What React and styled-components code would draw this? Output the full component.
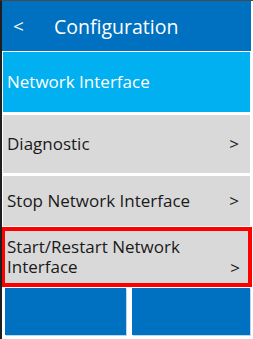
import React from 'react'
import styled, { createGlobalStyle } from 'styled-components'

const Global = createGlobalStyle`
  html, body { margin: 0; padding: 0; background: #ffffff; }
  * { box-sizing: border-box; }
`

const Screen = styled.div`
  width: 253px;
  height: 339px;
  background: #ffffff;
  border-left: 2px solid #1e1e1e;
  border-top: 1px solid #4a4a4a;
  display: flex;
  flex-direction: column;
  font-family: "Open Sans", "Noto Sans", sans-serif;
  overflow: hidden;
`

const Header = styled.div`
  height: 50px;
  margin-right: 2px;
  background: #0070c0;
  color: #ffffff;
  display: flex;
  align-items: center;
  padding-left: 11px;
`

const Back = styled.span`
  font-size: 19px;
  width: 41px;
`

const Title = styled.span`
  font-size: 19.5px;
`

const List = styled.div`
  display: flex;
  flex-direction: column;
  padding: 1px 0 0 1px;
  gap: 3px;
`

const Row = styled.div`
  height: ${p => p.$h}px;
  margin-right: ${p => p.$boxed ? 0 : 3}px;
  background: ${p => p.$active ? '#00b0f0' : '#d9d9d9'};
  color: ${p => p.$active ? '#ffffff' : '#1a1a1a'};
  display: flex;
  align-items: center;
  justify-content: space-between;
  padding: 0 ${p => p.$boxed ? 8 : 11}px 0 ${p => p.$boxed ? 2 : 4}px;
  font-size: 17px;
  line-height: 20px;
`

const Boxed = styled.div`
  margin-top: 1px;
  border: 4px solid #ff0000;
  margin-left: -1px;
  margin-right: 1px;
`

const Label = styled.span`
  max-width: 200px;
`

const Chevron = styled.span`
  align-self: ${p => p.$end ? 'flex-end' : 'center'};
  margin-bottom: ${p => p.$end ? 5 : 0}px;
`

const Tiles = styled.div`
  display: grid;
  grid-template-columns: 121px 118px;
  gap: 6px;
  padding: 1px 0 0 3px;
`

const Tile = styled.div`
  height: 47px;
  background: #0070c0;
  box-shadow: 1px 1px 0 #bcd6ee;
`

export default function App() {
  return (
    <>
      <Global />
      <Screen>
        <Header>
          <Back>&lt;</Back>
          <Title>Configuration</Title>
        </Header>
        <List>
          <Row $h={60} $active>
            <Label>Network Interface</Label>
          </Row>
          <Row $h={58}>
            <Label>Diagnostic</Label>
            <Chevron>&gt;</Chevron>
          </Row>
          <Row $h={50}>
            <Label>Stop Network Interface</Label>
            <Chevron>&gt;</Chevron>
          </Row>
        </List>
        <Boxed>
          <Row $h={52} $boxed>
            <Label>Start/Restart Network Interface</Label>
            <Chevron $end>&gt;</Chevron>
          </Row>
        </Boxed>
        <Tiles>
          <Tile />
          <Tile />
        </Tiles>
      </Screen>
    </>
  )
}
